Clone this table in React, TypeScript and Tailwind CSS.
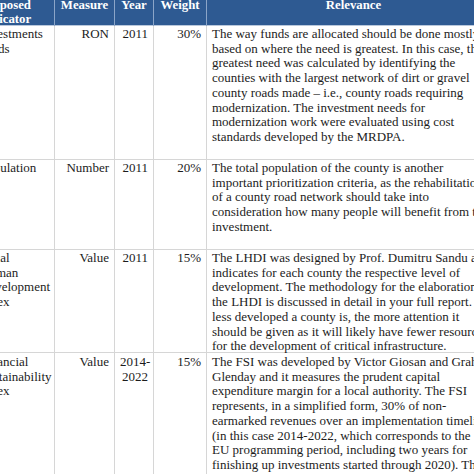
import React from "react";

type Row = {
  ind: string[];
  measure: string;
  year: string[];
  weight: string;
  rel: string[];
  h: string;
  pt: string;
};

const rows: Row[] = [
  {
    ind: ["Investments", "needs"],
    measure: "RON",
    year: ["2011"],
    weight: "30%",
    h: "h-[134px]",
    pt: "pt-[1px]",
    rel: [
      "The way funds are allocated should be done mostly",
      "based on where the need is greatest. In this case, the",
      "greatest need was calculated by identifying the",
      "counties with the largest network of dirt or gravel",
      "county roads made \u2013 i.e., county roads requiring",
      "modernization. The investment needs for",
      "modernization work were evaluated using cost",
      "standards developed by the MRDPA.",
    ],
  },
  {
    ind: ["Population"],
    measure: "Number",
    year: ["2011"],
    weight: "20%",
    h: "h-[90px]",
    pt: "pt-[1px]",
    rel: [
      "The total population of the county is another",
      "important prioritization criteria, as the rehabilitation",
      "of a county road network should take into",
      "consideration how many people will benefit from the",
      "investment.",
    ],
  },
  {
    ind: ["Local", "Human", "Development", "Index"],
    measure: "Value",
    year: ["2011"],
    weight: "15%",
    h: "h-[103px]",
    pt: "pt-[1px]",
    rel: [
      "The LHDI was designed by Prof. Dumitru Sandu and",
      "indicates for each county the respective level of",
      "development. The methodology for the elaboration of",
      "the LHDI is discussed in detail in your full report. The",
      "less developed a county is, the more attention it",
      "should be given as it will likely have fewer resources",
      "for the development of critical infrastructure.",
    ],
  },
  {
    ind: ["Financial", "Sustainability", "Index"],
    measure: "Value",
    year: ["2014-", "2022"],
    weight: "15%",
    h: "h-[140px]",
    pt: "pt-[2px]",
    rel: [
      "The FSI was developed by Victor Giosan and Graham",
      "Glenday and it measures the prudent capital",
      "expenditure margin for a local authority. The FSI",
      "represents, in a simplified form, 30% of non-",
      "earmarked revenues over an implementation timeline",
      "(in this case 2014-2022, which corresponds to the",
      "EU programming period, including two years for",
      "finishing up investments started through 2020). The",
    ],
  },
];

const Lines = ({ lines }: { lines: string[] }) => (
  <>
    {lines.map((l, i) => (
      <div key={i} className="whitespace-nowrap">
        {l}
      </div>
    ))}
  </>
);

export default function App() {
  return (
    <div className="w-[474px] h-[474px] overflow-hidden bg-white">
      <div
        className="ml-[-25px] mt-[-4px] w-[525px] text-[#1c1c1c] text-[13px] leading-[14.7px]"
        style={{ fontFamily: '"Liberation Serif", "Times New Roman", serif' }}
      >
        <div className="grid grid-cols-[80px_60px_39px_53px_293px] bg-[#2e5a92] text-white font-bold text-[12.8px] leading-[14px] h-[30px] border-b border-[#b9c8dc]">
          <div className="px-[5px] pt-[2px] text-left border-r border-[#8ba5c8]">
            <div>Proposed</div>
            <div>Indicator</div>
          </div>
          <div className="pt-[2px] text-center border-r border-[#8ba5c8]">Measure</div>
          <div className="pt-[2px] text-center border-r border-[#8ba5c8]">Year</div>
          <div className="pt-[2px] text-center border-r border-[#8ba5c8]">Weight</div>
          <div className="pt-[2px] text-center">Relevance</div>
        </div>
        {rows.map((r, i) => (
          <div
            key={i}
            className={`grid grid-cols-[80px_60px_39px_53px_293px] ${r.h} border-b border-[#d6d6d6]`}
          >
            <div className={`px-[5px] ${r.pt} border-r border-[#d6d6d6]`}>
              <Lines lines={r.ind} />
            </div>
            <div className={`px-[5px] ${r.pt} text-right border-r border-[#d6d6d6]`}>
              {r.measure}
            </div>
            <div className={`px-[5px] ${r.pt} text-right border-r border-[#d6d6d6]`}>
              <Lines lines={r.year} />
            </div>
            <div className={`px-[5px] ${r.pt} text-right border-r border-[#d6d6d6]`}>
              {r.weight}
            </div>
            <div className={`px-[5px] ${r.pt}`}>
              <Lines lines={r.rel} />
            </div>
          </div>
        ))}
      </div>
    </div>
  );
}
